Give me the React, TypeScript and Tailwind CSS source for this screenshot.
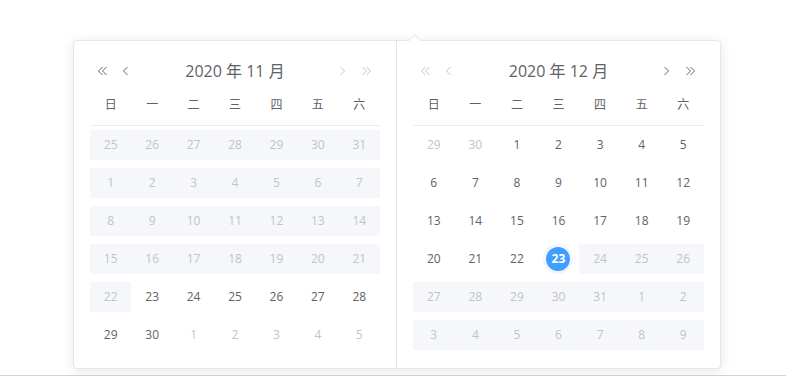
import React from "react";

type Cell = { d: number; kind: "normal" | "off" | "disabled" | "today" };

const weekdays = ["日", "一", "二", "三", "四", "五", "六"];

function build(list: [number, Cell["kind"]][]): Cell[][] {
  const rows: Cell[][] = [];
  for (let i = 0; i < list.length; i += 7) {
    rows.push(list.slice(i, i + 7).map(([d, kind]) => ({ d, kind })));
  }
  return rows;
}

const range = (a: number, b: number, kind: Cell["kind"]) =>
  Array.from({ length: b - a + 1 }, (_, i) => [a + i, kind] as [number, Cell["kind"]]);

const november = build([
  ...range(25, 31, "disabled"),
  ...range(1, 22, "disabled"),
  ...range(23, 30, "normal"),
  ...range(1, 5, "off"),
]);

const december = build([
  ...range(29, 30, "off"),
  ...range(1, 22, "normal"),
  [23, "today"],
  ...range(24, 31, "disabled"),
  ...range(1, 9, "disabled"),
]);

function Chevron({ double, dir, light }: { double?: boolean; dir: "l" | "r"; light?: boolean }) {
  const color = light ? "#c0c4cc" : "#606266";
  const one = (x: number) =>
    dir === "l" ? `M${x + 4.5} 0.5 L${x + 0.5} 4.5 L${x + 4.5} 8.5` : `M${x + 0.5} 0.5 L${x + 4.5} 4.5 L${x + 0.5} 8.5`;
  return (
    <svg width={double ? 10 : 6} height={10} viewBox={`0 0 ${double ? 10 : 6} 9`} fill="none">
      <path d={one(0)} stroke={color} strokeWidth={1} />
      {double && <path d={one(4)} stroke={color} strokeWidth={1} />}
    </svg>
  );
}

function DateCell({ cell }: { cell: Cell }) {
  if (cell.kind === "today") {
    return (
      <div className="h-[38px] py-1 flex items-center justify-center">
        <div className="w-[30px] h-[30px] rounded-full bg-[#f2f6fc] flex items-center justify-center">
          <div className="w-6 h-6 rounded-full bg-[#409eff] text-white font-bold flex items-center justify-center">
            {cell.d}
          </div>
        </div>
      </div>
    );
  }
  const cls =
    cell.kind === "disabled"
      ? "bg-[#f5f7fa] text-[#c0c4cc]"
      : cell.kind === "off"
      ? "text-[#c0c4cc]"
      : "text-[#606266]";
  return (
    <div className="h-[38px] py-1">
      <div className={`h-[30px] flex items-center justify-center ${cls}`}>{cell.d}</div>
    </div>
  );
}

function Panel({
  title,
  rows,
  leftLight,
  rightLight,
  divider,
}: {
  title: string;
  rows: Cell[][];
  leftLight?: boolean;
  rightLight?: boolean;
  divider?: boolean;
}) {
  return (
    <div className={`w-[323px] px-4 pt-4 pb-[14px] ${divider ? "border-r border-[#e4e4e4]" : ""}`}>
      <div className="h-7 grid grid-cols-[1fr_auto_1fr] items-center">
        <div className="flex items-center gap-[15px] pl-2">
          <Chevron double dir="l" light={leftLight} />
          <Chevron dir="l" light={leftLight} />
        </div>
        <div className="text-base text-[#606266]">{title}</div>
        <div className="flex items-center justify-end gap-[16px] pr-2">
          <Chevron dir="r" light={rightLight} />
          <Chevron double dir="r" light={rightLight} />
        </div>
      </div>
      <div className="grid grid-cols-7 h-[41px] border-b border-[#ebeef5] items-center text-[#606266]">
        {weekdays.map((w) => (
          <div key={w} className="text-center">
            {w}
          </div>
        ))}
      </div>
      {rows.map((r, i) => (
        <div key={i} className="grid grid-cols-7">
          {r.map((c, j) => (
            <DateCell key={j} cell={c} />
          ))}
        </div>
      ))}
    </div>
  );
}

export default function App() {
  return (
    <div
      className="h-[376px] border-b border-[#d4d4d4] bg-white text-xs"
      style={{ fontFamily: '"Open Sans", "Noto Sans CJK SC", sans-serif' }}
    >
      <div className="pt-10 pl-[73px]">
        <div className="relative w-[648px] bg-white border border-[#e4e7ed] rounded shadow-[0_2px_12px_0_rgba(0,0,0,0.1)] flex">
          <div className="absolute -top-[5px] left-[336px] w-[9px] h-[9px] rotate-45 bg-white border-l border-t border-[#e4e7ed]" />
          <Panel title="2020 年 11 月" rows={november} rightLight divider />
          <Panel title="2020 年 12 月" rows={december} leftLight />
        </div>
      </div>
    </div>
  );
}
